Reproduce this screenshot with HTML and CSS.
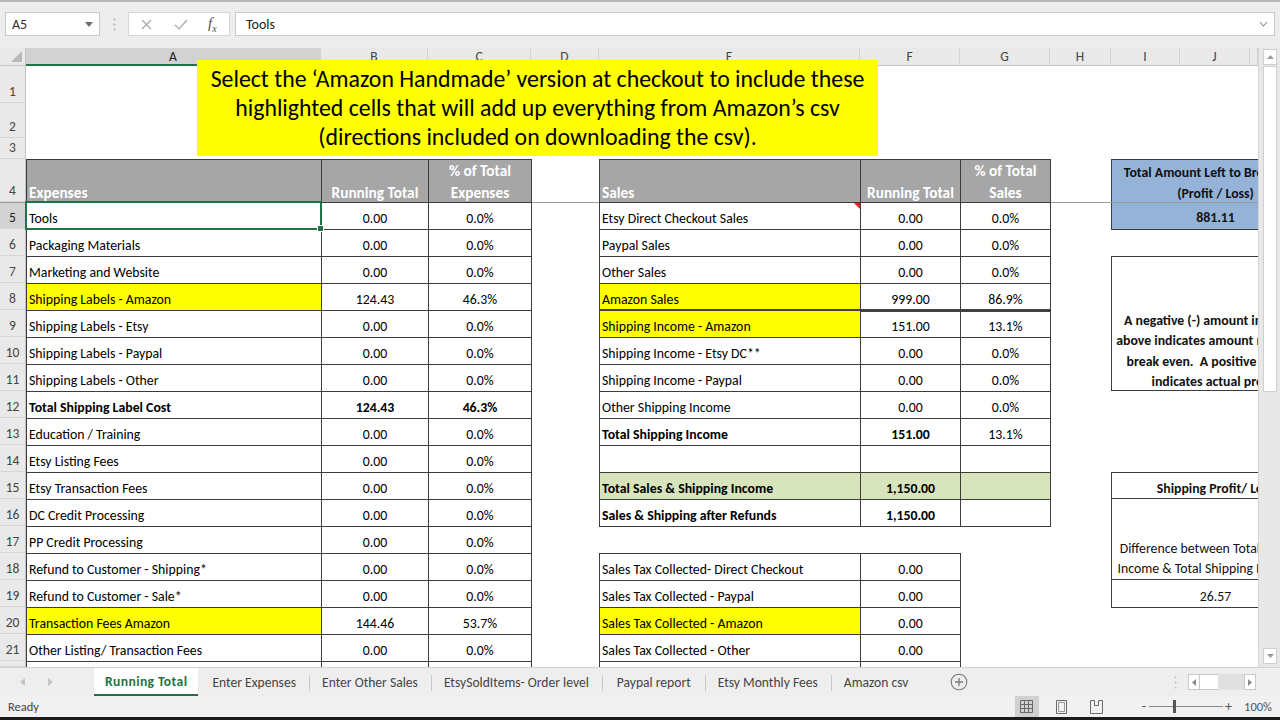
FILE: index.html
```html
<!DOCTYPE html>
<html>
<head>
<meta charset="utf-8">
<link rel="stylesheet" href="styles.css">
</head>
<body>
<div class="app">
  <div class="fbar">
    <div class="namebox"><span>A5</span><svg width="8" height="5" viewBox="0 0 8 5"><path d="M0 0h8L4 5z" fill="#6d6d6d"/></svg></div>
    <div class="fdots"><svg width="3" height="13" viewBox="0 0 3 13"><circle cx="1.5" cy="1.5" r="1.1" fill="#b4b4b4"/><circle cx="1.5" cy="6.5" r="1.1" fill="#b4b4b4"/><circle cx="1.5" cy="11.5" r="1.1" fill="#b4b4b4"/></svg></div>
    <div class="fbtns">
      <svg class="fb-x" width="11" height="11" viewBox="0 0 11 11"><path d="M1 1l9 9M10 1l-9 9" stroke="#a8a8a8" stroke-width="1.2"/></svg>
      <svg class="fb-ok" width="14" height="11" viewBox="0 0 14 11"><path d="M1 6l4 4 8-9" stroke="#a8a8a8" stroke-width="1.2" fill="none"/></svg>
      <span class="fx"><i>f</i><sub>x</sub></span>
    </div>
    <div class="finput"><span>Tools</span><svg width="9" height="6" viewBox="0 0 9 6"><path d="M1 1l3.5 4L8 1" stroke="#8a8a8a" stroke-width="1.1" fill="none"/></svg></div>
  </div>

  <div class="main">
    <div class="sheet">
      <!-- column headers -->
      <div class="ch corner r0 cR"><svg width="11" height="11" viewBox="0 0 11 11"><path d="M11 0v11H0z" fill="#b9b9b9"/></svg></div>
      <div class="ch sel r0 cA">A</div>
      <div class="ch r0 cB">B</div>
      <div class="ch r0 cC">C</div>
      <div class="ch r0 cD">D</div>
      <div class="ch r0 cE">E</div>
      <div class="ch r0 cF">F</div>
      <div class="ch r0 cG">G</div>
      <div class="ch r0 cH">H</div>
      <div class="ch r0 cI">I</div>
      <div class="ch r0 cJ">J</div>
      <div class="ch r0 cK"></div>

      <!-- row headers -->
      <div class="rh r1 cR">1</div>
      <div class="rh r2 cR">2</div>
      <div class="rh r3 cR">3</div>
      <div class="rh r4 cR">4</div>
      <div class="rh sel r5 cR">5</div>
      <div class="rh r6 cR">6</div>
      <div class="rh r7 cR">7</div>
      <div class="rh r8 cR">8</div>
      <div class="rh r9 cR">9</div>
      <div class="rh r10 cR">10</div>
      <div class="rh r11 cR">11</div>
      <div class="rh r12 cR">12</div>
      <div class="rh r13 cR">13</div>
      <div class="rh r14 cR">14</div>
      <div class="rh r15 cR">15</div>
      <div class="rh r16 cR">16</div>
      <div class="rh r17 cR">17</div>
      <div class="rh r18 cR">18</div>
      <div class="rh r19 cR">19</div>
      <div class="rh r20 cR">20</div>
      <div class="rh r21 cR">21</div>
      <div class="rh r22 cR"></div>

      <!-- Expenses table -->
      <div class="c bx hd r4 cA"><span>Expenses</span></div>
      <div class="c bx hd ctr r4 cB"><span>Running Total</span></div>
      <div class="c bx hd ctr r4 cC"><span>% of Total<br>Expenses</span></div>

      <div class="c bx r5 cA">Tools</div><div class="c bx ctr r5 cB">0.00</div><div class="c bx ctr r5 cC">0.0%</div>
      <div class="c bx r6 cA">Packaging Materials</div><div class="c bx ctr r6 cB">0.00</div><div class="c bx ctr r6 cC">0.0%</div>
      <div class="c bx r7 cA">Marketing and Website</div><div class="c bx ctr r7 cB">0.00</div><div class="c bx ctr r7 cC">0.0%</div>
      <div class="c bx yel r8 cA">Shipping Labels - Amazon</div><div class="c bx ctr r8 cB">124.43</div><div class="c bx ctr r8 cC">46.3%</div>
      <div class="c bx r9 cA">Shipping Labels - Etsy</div><div class="c bx ctr r9 cB">0.00</div><div class="c bx ctr r9 cC">0.0%</div>
      <div class="c bx r10 cA">Shipping Labels - Paypal</div><div class="c bx ctr r10 cB">0.00</div><div class="c bx ctr r10 cC">0.0%</div>
      <div class="c bx r11 cA">Shipping Labels - Other</div><div class="c bx ctr r11 cB">0.00</div><div class="c bx ctr r11 cC">0.0%</div>
      <div class="c bx bold r12 cA">Total Shipping Label Cost</div><div class="c bx bold ctr r12 cB">124.43</div><div class="c bx bold ctr r12 cC">46.3%</div>
      <div class="c bx r13 cA">Education / Training</div><div class="c bx ctr r13 cB">0.00</div><div class="c bx ctr r13 cC">0.0%</div>
      <div class="c bx r14 cA">Etsy Listing Fees</div><div class="c bx ctr r14 cB">0.00</div><div class="c bx ctr r14 cC">0.0%</div>
      <div class="c bx r15 cA">Etsy Transaction Fees</div><div class="c bx ctr r15 cB">0.00</div><div class="c bx ctr r15 cC">0.0%</div>
      <div class="c bx r16 cA">DC Credit Processing</div><div class="c bx ctr r16 cB">0.00</div><div class="c bx ctr r16 cC">0.0%</div>
      <div class="c bx r17 cA">PP Credit Processing</div><div class="c bx ctr r17 cB">0.00</div><div class="c bx ctr r17 cC">0.0%</div>
      <div class="c bx r18 cA">Refund to Customer - Shipping*</div><div class="c bx ctr r18 cB">0.00</div><div class="c bx ctr r18 cC">0.0%</div>
      <div class="c bx r19 cA">Refund to Customer - Sale*</div><div class="c bx ctr r19 cB">0.00</div><div class="c bx ctr r19 cC">0.0%</div>
      <div class="c bx yel r20 cA">Transaction Fees Amazon</div><div class="c bx ctr r20 cB">144.46</div><div class="c bx ctr r20 cC">53.7%</div>
      <div class="c bx r21 cA">Other Listing/ Transaction Fees</div><div class="c bx ctr r21 cB">0.00</div><div class="c bx ctr r21 cC">0.0%</div>
      <div class="c bx r22 cA"></div><div class="c bx r22 cB"></div><div class="c bx r22 cC"></div>

      <!-- Sales table -->
      <div class="c bx hd r4 cE"><span>Sales</span></div>
      <div class="c bx hd ctr r4 cF"><span>Running Total</span></div>
      <div class="c bx hd ctr r4 cG"><span>% of Total<br>Sales</span></div>

      <div class="c bx note r5 cE">Etsy Direct Checkout Sales</div><div class="c bx ctr r5 cF">0.00</div><div class="c bx ctr r5 cG">0.0%</div>
      <div class="c bx r6 cE">Paypal Sales</div><div class="c bx ctr r6 cF">0.00</div><div class="c bx ctr r6 cG">0.0%</div>
      <div class="c bx r7 cE">Other Sales</div><div class="c bx ctr r7 cF">0.00</div><div class="c bx ctr r7 cG">0.0%</div>
      <div class="c bx dbl yel r8 cE">Amazon Sales</div><div class="c bx dbl ctr r8 cF">999.00</div><div class="c bx dbl ctr r8 cG">86.9%</div>
      <div class="c bx yel r9 cE">Shipping Income - Amazon</div><div class="c bx ctr r9 cF">151.00</div><div class="c bx ctr r9 cG">13.1%</div>
      <div class="c bx r10 cE">Shipping Income - Etsy DC**</div><div class="c bx ctr r10 cF">0.00</div><div class="c bx ctr r10 cG">0.0%</div>
      <div class="c bx r11 cE">Shipping Income - Paypal</div><div class="c bx ctr r11 cF">0.00</div><div class="c bx ctr r11 cG">0.0%</div>
      <div class="c bx r12 cE">Other Shipping Income</div><div class="c bx ctr r12 cF">0.00</div><div class="c bx ctr r12 cG">0.0%</div>
      <div class="c bx bold r13 cE">Total Shipping Income</div><div class="c bx bold ctr r13 cF">151.00</div><div class="c bx ctr r13 cG">13.1%</div>
      <div class="c bx r14 cE"></div><div class="c bx r14 cF"></div><div class="c bx r14 cG"></div>
      <div class="c bx bold grn r15 cE">Total Sales &amp; Shipping Income</div><div class="c bx bold grn ctr r15 cF">1,150.00</div><div class="c bx grn r15 cG"></div>
      <div class="c bx bold r16 cE">Sales &amp; Shipping after Refunds</div><div class="c bx bold ctr r16 cF">1,150.00</div><div class="c bx r16 cG"></div>

      <!-- Sales tax table -->
      <div class="c bx r18 cE">Sales Tax Collected- Direct Checkout</div><div class="c bx ctr r18 cF">0.00</div>
      <div class="c bx r19 cE">Sales Tax Collected - Paypal</div><div class="c bx ctr r19 cF">0.00</div>
      <div class="c bx yel r20 cE">Sales Tax Collected - Amazon</div><div class="c bx ctr r20 cF">0.00</div>
      <div class="c bx r21 cE">Sales Tax Collected - Other</div><div class="c bx ctr r21 cF">0.00</div>
      <div class="c bx r22 cE"></div><div class="c bx r22 cF"></div>

      <!-- Right side boxes -->
      <div class="rbox pbox">
        <div class="rin">
          <div class="pb-h">Total Amount Left to Break Even<br>(Profit / Loss)</div>
          <div class="pb-v">881.11</div>
        </div>
      </div>
      <div class="rbox nbox">
        <div class="rin nb-t">A negative (-) amount in the cell<br>above indicates amount needed to<br>break even.&nbsp; A positive amount<br>indicates actual profit.</div>
      </div>
      <div class="rbox sbox">
        <div class="rin">
          <div class="sb-h">Shipping Profit/ Loss</div>
          <div class="sb-m">Difference between Total Shipping<br>Income &amp; Total Shipping Label Cost</div>
          <div class="sb-v">26.57</div>
        </div>
      </div>

      <div class="freeze"></div>
      <div class="selbox r5 cA"></div>

      <div class="banner">Select the ‘Amazon Handmade’ version at checkout to include these<br>highlighted cells that will add up everything from Amazon’s csv<br>(directions included on downloading the csv).</div>
    </div>

    <div class="vscroll">
      <div class="vbtn"><svg width="7" height="4" viewBox="0 0 7 4"><path d="M0 4h7L3.5 0z" fill="#9a9a9a"/></svg></div>
      <div class="vthumb"></div>
      <div class="vspace"></div>
      <div class="vbtn"><svg width="7" height="4" viewBox="0 0 7 4"><path d="M0 0h7L3.5 4z" fill="#9a9a9a"/></svg></div>
    </div>
  </div>

  <div class="tabbar">
    <div class="tnav">
      <svg width="5" height="8" viewBox="0 0 5 8"><path d="M5 0v8L0 4z" fill="#c4c4c4"/></svg>
      <svg width="5" height="8" viewBox="0 0 5 8"><path d="M0 0v8l5-4z" fill="#c4c4c4"/></svg>
    </div>
    <div class="tab active">Running Total</div>
    <div class="tab">Enter Expenses</div>
    <div class="tab sep">Enter Other Sales</div>
    <div class="tab sep">EtsySoldItems- Order level</div>
    <div class="tab sep wide">Paypal report</div>
    <div class="tab sep">Etsy Monthly Fees</div>
    <div class="tab sep">Amazon csv</div>
    <div class="tplus"><svg width="18" height="18" viewBox="0 0 18 18"><circle cx="9" cy="9" r="7.8" fill="none" stroke="#7a7a7a" stroke-width="1.1"/><path d="M9 5v8M5 9h8" stroke="#7a7a7a" stroke-width="1.3"/></svg></div>
    <div class="tfill"></div>
    <div class="hdots"><svg width="3" height="13" viewBox="0 0 3 13"><circle cx="1.5" cy="1.5" r="1" fill="#c0c0c0"/><circle cx="1.5" cy="6.5" r="1" fill="#c0c0c0"/><circle cx="1.5" cy="11.5" r="1" fill="#c0c0c0"/></svg></div>
    <div class="hscroll">
      <div class="hbtn"><svg width="4" height="7" viewBox="0 0 4 7"><path d="M4 0v7L0 3.5z" fill="#8a8a8a"/></svg></div>
      <div class="hthumb"></div>
      <div class="htrack"></div>
      <div class="hbtn"><svg width="4" height="7" viewBox="0 0 4 7"><path d="M0 0v7l4-3.5z" fill="#8a8a8a"/></svg></div>
    </div>
  </div>

  <div class="status">
    <span class="ready">Ready</span>
    <div class="sfill"></div>
    <div class="vicon on"><svg width="13" height="13" viewBox="0 0 13 13"><path d="M0.5 0.5h12v12h-12zM4.5 0.5v12M8.5 0.5v12M0.5 4.5h12M0.5 8.5h12" stroke="#6a6a6a" fill="none"/></svg></div>
    <div class="vicon"><svg width="11" height="14" viewBox="0 0 11 14"><path d="M0.5 0.5h10v13h-10z" stroke="#6a6a6a" fill="none"/><path d="M2.5 2.5h6v9h-6z" stroke="#9a9a9a" fill="none"/></svg></div>
    <div class="vicon"><svg width="13" height="14" viewBox="0 0 13 14"><path d="M0.5 0.5h4v5h4v-5h4v13h-12z" stroke="#6a6a6a" fill="none"/></svg></div>
    <div class="zoom">
      <span class="zm">-</span>
      <div class="zline"><div class="zthumb"></div></div>
      <span class="zp">+</span>
      <span class="zpct">100%</span>
    </div>
  </div>
  <div class="taskbar"></div>
</div>
</body>
</html>
```

FILE: styles.css
```css
* { box-sizing: border-box; }

body {
  margin: 0;
  font-family: Carlito, Calibri, Lato, "Liberation Sans", sans-serif;
  color: #000;
}

.app {
  width: 1280px;
  height: 720px;
  overflow: hidden;
  display: flex;
  flex-direction: column;
  background: #ededed;
}

/* ---------- formula bar ---------- */
.fbar {
  height: 48px;
  flex: none;
  border-top: 2px solid #b2b7b2;
  padding: 10px 5px 0 5px;
  display: flex;
  align-items: flex-start;
  background: #ededed;
}
.namebox {
  width: 95px;
  height: 24px;
  background: #fff;
  border: 1px solid #c9c9c9;
  display: flex;
  align-items: center;
  justify-content: space-between;
  padding: 0 6px 0 6px;
  font-size: 14px;
  color: #333;
}
.fdots {
  width: 28px;
  height: 24px;
  display: flex;
  align-items: center;
  justify-content: center;
}
.fbtns {
  width: 102px;
  height: 24px;
  background: #fff;
  border: 1px solid #d6d6d6;
  display: flex;
  align-items: center;
  padding-left: 12px;
}
.fb-x { margin-right: 22px; }
.fb-ok { margin-right: 20px; }
.fx {
  font-family: "Liberation Serif", serif;
  font-size: 15px;
  color: #555;
}
.fx sub { font-size: 10px; font-style: italic; }
.finput {
  margin-left: 5px;
  width: 1040px;
  height: 24px;
  background: #fff;
  border: 1px solid #c9c9c9;
  display: flex;
  align-items: center;
  justify-content: space-between;
  padding: 0 6px 0 10px;
  font-size: 14px;
  color: #222;
}

/* ---------- sheet ---------- */
.main {
  height: 619px;
  flex: none;
  display: flex;
}
.sheet {
  position: relative;
  width: 1258px;
  height: 619px;
  overflow: hidden;
  background: #fff;
  display: grid;
  grid-template-columns: 26px 295px 107px 103px 68px 261px 100px 90px 61px 69px 70px 8px;
  grid-template-rows: 18px 37px 35px 21px 43px repeat(17, 27px) 6px;
  font-size: 13.8px;
}

.r0 { grid-row: 1; }
.r1 { grid-row: 2; }
.r2 { grid-row: 3; }
.r3 { grid-row: 4; }
.r4 { grid-row: 5; }
.r5 { grid-row: 6; }
.r6 { grid-row: 7; }
.r7 { grid-row: 8; }
.r8 { grid-row: 9; }
.r9 { grid-row: 10; }
.r10 { grid-row: 11; }
.r11 { grid-row: 12; }
.r12 { grid-row: 13; }
.r13 { grid-row: 14; }
.r14 { grid-row: 15; }
.r15 { grid-row: 16; }
.r16 { grid-row: 17; }
.r17 { grid-row: 18; }
.r18 { grid-row: 19; }
.r19 { grid-row: 20; }
.r20 { grid-row: 21; }
.r21 { grid-row: 22; }
.r22 { grid-row: 23; }

.cR { grid-column: 1; }
.cA { grid-column: 2; }
.cB { grid-column: 3; }
.cC { grid-column: 4; }
.cD { grid-column: 5; }
.cE { grid-column: 6; }
.cF { grid-column: 7; }
.cG { grid-column: 8; }
.cH { grid-column: 9; }
.cI { grid-column: 10; }
.cJ { grid-column: 11; }
.cK { grid-column: 12; }

/* column headers */
.ch {
  background: #e9e9e9;
  border-right: 1px solid #d3d3d3;
  border-bottom: 1px solid #c4c4c4;
  display: flex;
  align-items: center;
  justify-content: center;
  color: #444;
  font-size: 13.5px;
}
.ch.corner {
  justify-content: flex-end;
  align-items: flex-end;
  padding: 0 3px 3px 0;
  border-right-color: #c4c4c4;
}
.ch.sel {
  background: #d2d2d2;
  border-bottom: 2px solid #217346;
  color: #222;
}

/* row headers */
.rh {
  background: #e9e9e9;
  border-right: 1px solid #c4c4c4;
  border-bottom: 1px solid #d6d6d6;
  display: flex;
  align-items: flex-end;
  justify-content: center;
  padding-bottom: 1px;
  line-height: 18px;
  color: #444;
  font-size: 13.5px;
}
.rh.sel { background: #d2d2d2; color: #222; }

/* cells */
.c {
  display: flex;
  align-items: flex-end;
  padding: 0 2px 1px 2px;
  line-height: 18px;
  white-space: nowrap;
  overflow: hidden;
  position: relative;
}
.bx {
  border: 1px solid #3c3c3c;
  margin: 0 -1px -1px 0;
}
.ctr { justify-content: center; text-align: center; }
.bold { font-weight: bold; }
.yel { background: #ffff00; }
.grn { background: #d8e4bc; }
.dbl {
  border-bottom: 3px double #444;
  padding-bottom: 0;
  margin-bottom: -2px;
}
.hd {
  background: #a6a6a6;
  color: #fff;
  font-weight: bold;
  font-size: 15.3px;
  line-height: 22px;
  padding-bottom: 0;
}
.hd span { margin-bottom: -2px; }
.note::after {
  content: "";
  position: absolute;
  right: 0;
  top: 0;
  border-top: 6px solid #e0201c;
  border-left: 6px solid transparent;
}

/* right boxes */
.rbox {
  grid-column: 10 / 13;
  border: 1px solid #3c3c3c;
  border-right: none;
  overflow: hidden;
  font-weight: bold;
  color: #111;
}
.rin {
  width: 207px;
  height: 100%;
}
.pbox {
  grid-row: 5 / 7;
  background: #95b3d7;
  margin-bottom: -1px;
}
.pbox .rin {
  display: grid;
  grid-template-rows: 44px 1fr;
}
.pb-h {
  text-align: center;
  line-height: 21px;
  align-self: end;
}
.pb-v {
  text-align: center;
  align-self: end;
  line-height: 18px;
  padding-bottom: 2px;
}
.nbox {
  grid-row: 8 / 13;
}
.nb-t {
  text-align: center;
  line-height: 20.4px;
  padding-top: 54px;
}
.sbox {
  grid-row: 16 / 21;
  margin-bottom: -1px;
}
.sbox .rin {
  display: grid;
  grid-template-rows: 26px 81px 1fr;
}
.sb-h {
  line-height: 18px;
  border-bottom: 1px solid #3c3c3c;
  display: flex;
  align-items: flex-end;
  justify-content: center;
}
.sb-m {
  font-weight: normal;
  text-align: center;
  line-height: 20px;
  display: flex;
  flex-direction: column;
  justify-content: flex-end;
  border-bottom: 1px solid #3c3c3c;
}
.sb-v {
  font-weight: normal;
  text-align: center;
  align-self: end;
  line-height: 18px;
  padding-bottom: 1px;
}

/* freeze line & selection */
.freeze {
  grid-column: 1 / -1;
  grid-row: 6;
  align-self: start;
  height: 1px;
  background: #9c9c9c;
}
.selbox {
  border: 2px solid #217346;
  margin: -1px -1px -1px -1px;
  position: relative;
}
.selbox::after {
  content: "";
  position: absolute;
  right: -4px;
  bottom: -4px;
  width: 5px;
  height: 5px;
  background: #217346;
  border: 1px solid #fff;
}

.banner {
  position: absolute;
  left: 197px;
  top: 12px;
  width: 681px;
  height: 96px;
  background: #ffff00;
  display: flex;
  align-items: center;
  justify-content: center;
  text-align: center;
  font-size: 23.8px;
  line-height: 29px;
  padding-bottom: 2px;
  color: #000;
  white-space: nowrap;
}

/* vertical scroll */
.vscroll {
  width: 22px;
  background: #e8e8e8;
  border-left: 1px solid #d4d4d4;
  display: flex;
  flex-direction: column;
  padding: 1px 3px 3px 4px;
}
.vbtn {
  height: 16px;
  background: #fff;
  border: 1px solid #cfcfcf;
  display: flex;
  align-items: center;
  justify-content: center;
  flex: none;
}
.vthumb {
  margin-top: 1px;
  height: 326px;
  background: #fff;
  border: 1px solid #cfcfcf;
  flex: none;
}
.vspace { flex: 1; }

/* tab bar */
.tabbar {
  height: 29px;
  flex: none;
  display: flex;
  align-items: stretch;
  background: #eeeeee;
  border-top: 1px solid #d2d2d2;
  font-size: 13.6px;
  color: #444;
}
.tnav {
  width: 94px;
  display: flex;
  align-items: center;
  padding-left: 20px;
  gap: 23px;
}
.tab {
  display: flex;
  align-items: center;
  padding: 0 13px;
  position: relative;
  white-space: nowrap;
}
.tab.wide { padding: 0 14px 0 15px; }
.tab.sep::before {
  content: "";
  position: absolute;
  left: 0;
  top: 7px;
  height: 16px;
  width: 1px;
  background: #c8c8c8;
}
.tab.sep:last-of-type::after {
  content: "";
  position: absolute;
  right: 0;
  top: 7px;
  height: 16px;
  width: 1px;
  background: #c8c8c8;
}
.tab.active {
  background: #fff;
  color: #217346;
  font-weight: bold;
  letter-spacing: 0.4px;
  padding: 0 11px 0 11px;
  margin-right: 1px;
  border-bottom: 2px solid #217346;
}
.tplus {
  display: flex;
  align-items: center;
  margin-left: 28px;
}
.tfill { flex: 1; }
.hdots {
  display: flex;
  align-items: center;
  margin-right: 11px;
}
.hscroll {
  display: flex;
  align-items: center;
  margin-right: 24px;
}
.hbtn {
  width: 12px;
  height: 16px;
  background: #fff;
  border: 1px solid #c8c8c8;
  display: flex;
  align-items: center;
  justify-content: center;
}
.hthumb {
  width: 18px;
  height: 16px;
  background: #fff;
  border-top: 1px solid #c8c8c8;
  border-bottom: 1px solid #c8c8c8;
}
.htrack {
  width: 26px;
  height: 16px;
  background: #e0e0e0;
}

/* status bar */
.status {
  height: 21px;
  flex: none;
  display: flex;
  align-items: center;
  background: #f1f1f1;
  font-size: 12.5px;
  color: #444;
  padding-left: 8px;
}
.sfill { flex: 1; }
.vicon {
  width: 24px;
  height: 21px;
  display: flex;
  align-items: center;
  justify-content: center;
  margin-right: 11px;
}
.vicon.on { background: #d0d0d0; }
.zoom {
  display: flex;
  align-items: center;
  font-size: 14px;
  color: #555;
  padding-right: 8px;
  margin-left: 18px;
}
.zm { margin-left: 4px; margin-right: 3px; }
.zline {
  width: 74px;
  height: 1px;
  background: #8a8a8a;
  position: relative;
}
.zthumb {
  position: absolute;
  left: 24px;
  top: -6px;
  width: 3px;
  height: 13px;
  background: #555;
}
.zp { margin-left: 2px; margin-right: 12px; }
.zpct { font-size: 12.5px; }

.taskbar {
  height: 3px;
  flex: none;
  background: #1a1a1a;
}
```
